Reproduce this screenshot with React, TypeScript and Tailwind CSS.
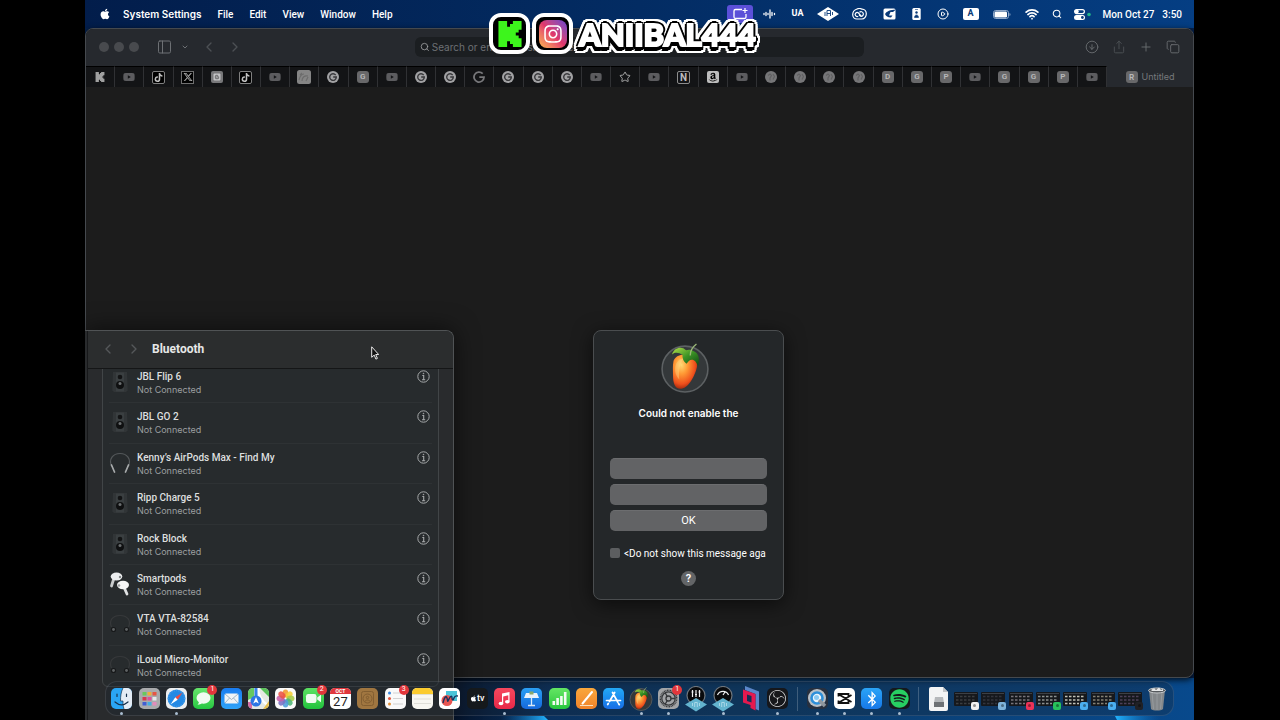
import type { ReactNode } from 'react';
import {
	FaAmazon,
	FaApple,
	FaBlogger,
	FaBluetoothB,
	FaInstagram,
	FaSpotify,
	FaTiktok,
	FaXTwitter,
	FaYoutube,
} from 'react-icons/fa6';
import { SiKick, SiObsstudio } from 'react-icons/si';
import {
	ChevronDown,
	ChevronLeft,
	ChevronRight,
	CircleArrowDown,
	CirclePlay,
	Copy,
	PanelLeft,
	Plus,
	Search,
	Share,
	Star,
	Wifi,
} from 'lucide-react';

const menus = ['File', 'Edit', 'View', 'Window', 'Help'];

const tabs = [
	'kick', 'youtube', 'tiktok', 'x', 'blogger', 'tiktok', 'youtube', 'image', 'round-G', 'G', 'youtube', 'round-G',
	'round-G', 'google', 'round-G', 'round-G', 'round-G', 'youtube', 'star', 'youtube', 'notion', 'amazon', 'youtube',
	'globe', 'globe', 'globe', 'globe', 'D', 'G', 'P', 'youtube', 'G', 'G', 'P', 'youtube',
];

const devices = [
	{ name: 'JBL Flip 6', type: 'speaker' },
	{ name: 'JBL GO 2', type: 'speaker' },
	{ name: 'Kenny’s AirPods Max - Find My', type: 'max' },
	{ name: 'Ripp Charge 5', type: 'speaker' },
	{ name: 'Rock Block', type: 'speaker' },
	{ name: 'Smartpods', type: 'pods' },
	{ name: 'VTA VTA-82584', type: 'headphones' },
	{ name: 'iLoud Micro-Monitor', type: 'headphones' },
];

function MenuSlot({ width, children }: { width: string; children: ReactNode }) {
	return <span className={`flex shrink-0 items-center justify-center ${width}`}>{children}</span>;
}

function MenuBar() {
	return (
		<header className="flex h-7 shrink-0 items-center justify-between bg-linear-to-r from-[#021d4b] via-[#032c63] to-[#053e83] pr-3 pl-[14px] text-[10px] text-white">
			<nav className="flex items-center gap-4">
				<FaApple className="-mr-1 size-3" />
				<a href="#" className="font-['Inter',sans-serif] font-semibold">System Settings</a>
				{menus.map((menu) => (
					<a key={menu} href="#" className="font-medium">{menu}</a>
				))}
			</nav>
			<div className="flex items-center gap-3">
				<MenuSlot width="w-5">
					<svg width="26" height="18" viewBox="0 0 26 18" className="shrink-0">
						<rect width="26" height="18" rx="3" fill="#5b50d8" />
						<path d="M15 4.500H8.500a1.500 1.500 0 0 0-1.500 1.500v6a1.500 1.500 0 0 0 1.500 1.500h9a1.500 1.500 0 0 0 1.500-1.500V9" fill="none" stroke="#fff" strokeWidth="1.300" />
						<path d="M18 3v5M15.500 5.500h5" stroke="#fff" strokeWidth="1.200" />
					</svg>
				</MenuSlot>
				<MenuSlot width="w-4">
					<svg width="13" height="10" viewBox="0 0 13 10" stroke="#fff" strokeWidth="1.300" strokeLinecap="round">
						<path d="M1 4.500v1M3 3.500v3M5 4.500v1M7 1v8M9 3.500v3M11.500 4.500v1" />
					</svg>
				</MenuSlot>
				<MenuSlot width="w-4"><span className="text-[9px] font-bold">UA</span></MenuSlot>
				<MenuSlot width="w-5">
					<svg width="22" height="14" viewBox="0 0 22 14" className="shrink-0">
						<path d="M0 7 11 0l11 7-11 7z" fill="#fff" />
						<path d="M8 5v4M10 9V3.500h3.500V9M10 6.500h3.500M15.500 5v3" fill="none" stroke="#0a3a78" strokeWidth=".9" />
					</svg>
				</MenuSlot>
				<MenuSlot width="w-5">
					<svg width="15" height="12" viewBox="0 0 15 12" fill="none" stroke="#fff" strokeWidth="1.200">
						<path d="M4.500 1.200C6 .5 8.500.3 10 1.200c2.500 0 4.300 2 4.300 4.500S12.500 11 10 11H5C2.500 11 .7 9 .7 6.800S2 2 4.500 1.200z" />
						<path d="M9 8 6.500 5a2 2 0 1 0-.3 3.200M7 7l2 1.300a2.300 2.300 0 1 0-1.500-4" />
					</svg>
				</MenuSlot>
				<MenuSlot width="w-4">
					<svg width="13" height="12" viewBox="0 0 13 12">
						<rect x=".5" y=".5" width="12" height="11" rx="1.500" fill="#fff" />
						<path d="M2 6c2-3 5-4 11-4.500L10 4H7.500L6 7.500h3.500L8 9.500C4.500 9.500 3 8 2 6z" fill="#0a3a78" />
					</svg>
				</MenuSlot>
				<MenuSlot width="w-[14px]">
					<svg width="9" height="12" viewBox="0 0 9 12">
						<rect x=".3" width="8.400" height="12" rx="1.500" fill="#fff" />
						<circle cx="4.500" cy="4.500" r="1.200" fill="#0a3a78" />
						<path d="M2.500 9.500c0-3.500 4-3.500 4 0zM3 1.500h3" fill="#0a3a78" stroke="#0a3a78" strokeWidth=".6" />
					</svg>
				</MenuSlot>
				<MenuSlot width="w-[14px]"><CirclePlay className="size-3" /></MenuSlot>
				<MenuSlot width="w-[18px]">
					<span className="flex h-3 w-4 items-center justify-center rounded-xs bg-white text-[9px] font-bold text-[#0a3a78]">A</span>
				</MenuSlot>
				<MenuSlot width="w-5">
					<svg width="18" height="9" viewBox="0 0 18 9">
						<rect x=".5" y=".5" width="15" height="8" rx="2.200" fill="none" stroke="#8fa9cb" />
						<rect x="1.500" y="1.500" width="12.500" height="6" rx="1.300" fill="#fff" />
						<path d="M16.500 3v3c1.300-.4 1.300-2.600 0-3z" fill="#8fa9cb" />
					</svg>
				</MenuSlot>
				<MenuSlot width="w-4"><Wifi className="size-[14px]" strokeWidth={3} /></MenuSlot>
				<MenuSlot width="w-[10px]"><Search className="size-[10px]" strokeWidth={2.5} /></MenuSlot>
				<MenuSlot width="w-[17px]">
					<svg width="17" height="11" viewBox="0 0 17 11">
						<rect x=".6" y=".6" width="9.800" height="4" rx="2" fill="none" stroke="#fff" strokeWidth="1.200" />
						<circle cx="2.700" cy="2.600" r="2" fill="#fff" />
						<rect y="6" width="11" height="5" rx="2.500" fill="#fff" />
						<circle cx="8.400" cy="8.500" r="1.400" fill="#0a3a78" />
						<circle cx="15" cy="5.500" r="1.800" fill="#20b38a" />
					</svg>
				</MenuSlot>
				<time className="flex gap-2 font-medium whitespace-nowrap">
					<span>Mon Oct 27</span>
					<span>3:50</span>
				</time>
			</div>
		</header>
	);
}

function TabIcon({ type }: { type: string }) {
	switch (type) {
		case 'kick':
			return <SiKick className="size-[10px] text-[#a0a0a0]" />;
		case 'youtube':
			return <FaYoutube className="size-3 text-[#5c5c5f]" />;
		case 'tiktok':
			return (
				<span className="flex size-[13px] items-center justify-center rounded-xs border border-[#808080] bg-black">
					<FaTiktok className="size-[9px] text-[#c0c0c0]" />
				</span>
			);
		case 'x':
			return (
				<span className="flex size-[13px] items-center justify-center border border-[#707070] bg-black">
					<FaXTwitter className="size-[10px] text-[#a8a8a8]" />
				</span>
			);
		case 'blogger':
			return (
				<span className="flex size-3 items-center justify-center rounded-xs bg-[#78787a]">
					<FaBlogger className="size-2 text-[#c4c4c6]" />
				</span>
			);
		case 'image':
			return (
				<svg viewBox="0 0 14 14" className="size-[14px]">
					<rect width="14" height="14" rx="2.500" fill="#858585" />
					<path d="M2 10c1-4 3-6 5-6M5 11c0-3 2-6 6-5M9 11l2-4M3 5l2-2" stroke="#6c6c6c" strokeWidth="1.200" fill="none" />
				</svg>
			);
		case 'round-G':
			return (
				<svg viewBox="0 0 12 12" className="size-3">
					<circle cx="6" cy="6" r="6" fill="#a2a2a4" />
					<path d="M8.700 4.200A3.300 3.300 0 1 0 9.300 6H6.200" stroke="#37373a" strokeWidth="1.400" fill="none" />
				</svg>
			);
		case 'google':
			return (
				<svg viewBox="0 0 12 12" className="size-3">
					<path d="M9.700 2.700A5 5 0 1 0 11 6.200H6.300" stroke="#77777a" strokeWidth="1.800" fill="none" />
				</svg>
			);
		case 'star':
			return <Star className="size-3 text-[#a8a8a8]" />;
		case 'notion':
			return (
				<span className="flex size-[13px] items-center justify-center rounded-xs border border-[#8d8d8d] text-[10px] font-bold text-[#bcbcbc]">
					N
				</span>
			);
		case 'amazon':
			return (
				<span className="flex size-3 items-center justify-center rounded-xs bg-[#bdbdbd]">
					<FaAmazon className="size-[10px] text-black" />
				</span>
			);
		case 'globe':
			return (
				<svg viewBox="0 0 12 12" className="size-3">
					<circle cx="6" cy="6" r="6" fill="#767678" />
					<path d="M3 4.500 5 3l1.500 1.500L5 7v2.500M8 3l1.500 2.500L8 8.500" stroke="#606062" strokeWidth="1.200" fill="none" />
				</svg>
			);
		default:
			return (
				<span className="flex size-3 items-center justify-center rounded-[3px] bg-[#68686a] text-[8px] font-semibold text-[#b8b8ba]">
					{type}
				</span>
			);
	}
}

function Browser() {
	return (
		<main className="relative mb-[42px] flex flex-1 flex-col overflow-hidden rounded-lg border border-[#45494e] bg-[#1c1c1c] shadow-[0_2px_6px_rgba(0,0,0,0.8)]">
			<div className="flex h-[37px] shrink-0 items-center bg-[#26292e] pb-px text-[#6d7074]">
				<div className="flex flex-1 items-center pl-[13px]">
					<div className="flex gap-[5px]">
						<span className="size-[10px] rounded-full bg-[#484a4e]" />
						<span className="size-[10px] rounded-full bg-[#484a4e]" />
						<span className="size-[10px] rounded-full bg-[#484a4e]" />
					</div>
					<button className="ml-[17px]"><PanelLeft className="h-4 w-[17px]" strokeWidth={1.5} /></button>
					<button className="ml-2"><ChevronDown className="size-2" strokeWidth={3} /></button>
					<button className="ml-3"><ChevronLeft className="size-4 text-[#4c5054]" /></button>
					<button className="ml-[10px]"><ChevronRight className="size-4 text-[#4c5054]" /></button>
				</div>
				<label className="flex h-5 w-[449px] items-center gap-[2px] rounded-md bg-[#1b1e21] px-[5px]">
					<Search className="size-[10px] text-[#a2a4a6]" />
					<input
						className="w-full bg-transparent font-['Inter',sans-serif] text-[10px] placeholder:text-[#6d7074] focus:outline-none"
						placeholder="Search or enter website name"
					/>
				</label>
				<div className="flex flex-1 items-center justify-end gap-[13px] pr-[13px]">
					<button><CircleArrowDown className="size-[14px]" strokeWidth={1.5} /></button>
					<button><Share className="size-[14px] text-[#4f5357]" strokeWidth={1.5} /></button>
					<button><Plus className="size-[14px]" strokeWidth={1.5} /></button>
					<button><Copy className="size-[14px]" strokeWidth={1.5} /></button>
				</div>
			</div>
			<div className="flex h-[21px] shrink-0 bg-[#131416]">
				{tabs.map((tab, index) => (
					<button
						key={index}
						className="flex flex-1 items-center justify-center border-t border-r border-t-black border-r-[#303134]"
					>
						<TabIcon type={tab} />
					</button>
				))}
				<button className="flex w-[86px] shrink-0 items-center justify-center gap-1 bg-[#26292e] font-['Inter',sans-serif] text-[9px] text-[#77797d]">
					<TabIcon type="R" />
					Untitled
				</button>
			</div>
		</main>
	);
}

function DeviceIcon({ type }: { type: string }) {
	if (type === 'speaker') {
		return (
			<svg viewBox="0 0 22 24" className="h-6 w-[22px]">
				<path d="M4 2h14l.7 18.500-1.700 1.500H5l-1.700-1.500z" fill="#313537" />
				<path d="M7 2.500h8v19H7z" fill="#3a3f41" />
				<circle cx="11" cy="7" r="2.300" fill="#131415" />
				<circle cx="11" cy="15" r="4" fill="#0f1011" />
				<circle cx="11" cy="13.500" r="1.500" fill="#6a6e70" />
			</svg>
		);
	}
	if (type === 'pods') {
		return (
			<svg viewBox="0 0 22 24" className="h-6 w-[22px]">
				<path d="M5 6 2.500 14" stroke="#c9cccd" strokeWidth="2.800" strokeLinecap="round" />
				<ellipse cx="7.500" cy="4.500" rx="5.800" ry="4" fill="#eceeef" />
				<path d="m14 13 4 9" stroke="#dfe1e2" strokeWidth="2.800" strokeLinecap="round" />
				<ellipse cx="14" cy="13" rx="6" ry="4.200" fill="#f5f6f6" />
				<circle cx="11" cy="5" r="1.200" fill="#85898b" />
				<circle cx="10" cy="13.500" r="1.300" fill="#999d9f" />
			</svg>
		);
	}
	if (type === 'max') {
		return (
			<svg viewBox="0 0 22 24" className="h-6 w-[22px]" fill="none" strokeLinecap="round">
				<path d="M2.500 15C-.5 8 4 2.500 11 2.500S22.500 8 19.500 15" stroke="#54585a" strokeWidth="1.200" />
				<path d="M2.500 14 5.500 21M19.500 14l-3 7" stroke="#a7aaab" strokeWidth="1.700" />
			</svg>
		);
	}
	return (
		<svg viewBox="0 0 22 24" className="h-6 w-[22px]" fill="none">
			<path d="M2.500 15C-.5 8 4 3.500 11 3.500S22.500 8 19.500 15" stroke="#37393b" strokeWidth="1.200" />
			<circle cx="4.500" cy="17.500" r="2.600" fill="#17191a" />
			<circle cx="17.500" cy="17.500" r="2.600" fill="#17191a" />
			<circle cx="4.500" cy="17.500" r="1.400" fill="#606365" />
			<circle cx="17.500" cy="17.500" r="1.400" fill="#606365" />
		</svg>
	);
}

function InfoIcon() {
	return (
		<svg viewBox="0 0 13 13" className="size-[13px]" fill="none" stroke="#a6a9aa">
			<circle cx="6.500" cy="6.500" r="5.700" />
			<path d="M5.300 5.500h1.400v4M5 9.700h3.200" strokeWidth="1.100" />
			<circle cx="6.500" cy="3.500" r=".5" fill="#a6a9aa" strokeWidth=".5" />
		</svg>
	);
}

function BluetoothSettings() {
	return (
		<section className="absolute top-[330px] bottom-0 left-0 flex w-[369px] overflow-hidden rounded-tr-lg border-t border-r border-[#505355] bg-[#292b2d] shadow-[0_0_24px_rgba(0,0,0,0.6)]">
			<div className="w-[3px] border-r border-[#17181a]" />
			<div className="flex flex-1 flex-col">
				<header className="flex h-[38px] shrink-0 items-center border-b border-[#151617] bg-[#2b2d2e] pb-px pl-3">
					<button><ChevronLeft className="size-4 text-[#55585a]" /></button>
					<button className="ml-[10px]"><ChevronRight className="size-4 text-[#55585a]" /></button>
					<h1 className="ml-[10px] text-[12px] font-bold text-[#e6e7e7]">Bluetooth</h1>
				</header>
				<div className="flex-1 overflow-hidden">
					<ul className="-mt-[7px] mr-[14px] ml-[14px] grid h-[325px] auto-rows-fr rounded-b-md border border-[#414547] bg-[#272b2d] px-[6px]">
						{devices.map((device) => (
							<li key={device.name} className="flex items-start gap-[6px] border-b border-[#2e3234] pt-[7px] last:border-0">
								<DeviceIcon type={device.type} />
								<div className="flex-1">
									<h2 className="text-[10px] leading-[14px] font-medium text-[#dddfdf]">{device.name}</h2>
									<p className="font-['Inter',sans-serif] text-[9px] leading-3 text-[#9c9fa0]">Not Connected</p>
								</div>
								<button className="mr-[2px]"><InfoIcon /></button>
							</li>
						))}
					</ul>
				</div>
			</div>
		</section>
	);
}

function FruitIcon({ className }: { className: string }) {
	return (
		<svg viewBox="0 0 48 48" className={className}>
			<defs>
				<radialGradient id="fruit" cx=".35" cy=".3" r=".75">
					<stop offset="0" stopColor="#ffd873" />
					<stop offset=".35" stopColor="#ff9a35" />
					<stop offset=".75" stopColor="#ee4f1c" />
					<stop offset="1" stopColor="#8c1f0b" />
				</radialGradient>
				<linearGradient id="leaf" x1="0" x2="1" y1="0" y2="1">
					<stop offset="0" stopColor="#b4e04a" />
					<stop offset=".5" stopColor="#3d9425" />
					<stop offset="1" stopColor="#0d4714" />
				</linearGradient>
			</defs>
			<circle cx="24" cy="25" r="22" fill="#34383a" stroke="#5d6163" strokeWidth="1.500" />
			<path d="M13 17c2-5 8-7 13-5 7 0 11 4 9.500 11C33.500 32 27 44 19.500 44 14 44 12.500 38 12.500 31c0-5-.5-9 .5-14z" fill="url(#fruit)" />
			<path d="M15.500 20c2-4 4-5 7-5-3 4-5 11-4 20-4-4-5-10-3-15z" fill="#ffe59a" opacity=".35" />
			<path d="M25 7c-4-4-11-3-13.500 4 4-3 7-1 10 0 0 4 1 7 4 9 2-3 3-4 5-4 3 0 4 2 6 6 2-6 1-12-4-14-2-1.500-5-2-7.500-1z" fill="url(#leaf)" />
			<path d="M29 12c0-5 2-8 6-11" fill="none" stroke="#9bb878" strokeWidth="1.300" />
		</svg>
	);
}

function PluginDialog() {
	return (
		<section
			role="dialog"
			className="absolute top-[330px] left-[508px] flex w-[191px] flex-col rounded-lg border border-[#4a4d4f] bg-[#242729] px-4 pt-3 pb-[13px] text-white shadow-[0_4px_20px_rgba(0,0,0,0.6)]"
		>
			<div className="flex justify-center pr-2"><FruitIcon className="size-[50px]" /></div>
			<h2 className="mt-3 h-[53px] text-center font-['Inter',sans-serif] text-[10px] leading-4 font-semibold">Could not enable the</h2>
			<div className="flex flex-col gap-[5px] text-[11px]">
				<button className="h-[21px] rounded-[5px] border-t border-[#6c6d6f] bg-[#626365]" />
				<button className="h-[21px] rounded-[5px] border-t border-[#6c6d6f] bg-[#626365]" />
				<button className="h-[21px] rounded-[5px] border-t border-[#6c6d6f] bg-[#626365]">OK</button>
			</div>
			<label className="mt-[14px] flex h-4 items-center gap-1 text-[10px] whitespace-nowrap">
				<input type="checkbox" className="size-[10px] shrink-0 appearance-none rounded-xs bg-[#5c5e60]" />
				<span>&lt;Do not show this message aga</span>
			</label>
			<button className="mx-auto mt-[10px] size-[15px] rounded-full bg-[#636567] text-[11px] leading-[15px] font-semibold">?</button>
		</section>
	);
}

function AppTile({ color, children }: { color: string; children?: ReactNode }) {
	return (
		<span className={`flex size-[21px] items-center justify-center overflow-hidden rounded-[5px] ${color}`}>{children}</span>
	);
}

function DockItem({ running, badge, children }: { running?: boolean; badge?: string; children: ReactNode }) {
	return (
		<button className="relative flex h-[34px] min-w-0 flex-1 items-center justify-center">
			{children}
			{badge && (
				<span className="absolute top-[3px] right-0 flex size-[10px] items-center justify-center rounded-full bg-[#e2363b] text-[7px] text-white">
					{badge}
				</span>
			)}
			{running && <span className="absolute bottom-px size-[3px] rounded-full bg-[#a9bccf]" />}
		</button>
	);
}

function UaKnob({ meter }: { meter?: boolean }) {
	return (
		<svg viewBox="0 0 22 26" className="h-[26px] w-[22px]">
			<circle cx="11" cy="9.500" r="9" fill="#090a0c" stroke="#6e757c" strokeWidth="1.200" />
			<path
				d={meter ? 'M5.500 9a6 6 0 0 1 11 0M11 9l2-3' : 'M7.500 4v7M11 4v7M14.500 4v7M6.500 6h2M10 8.500h2M13.500 6h2'}
				fill="none"
				stroke="#f0f2f4"
				strokeWidth="1.200"
			/>
			<path d="m11 12 11 6.500-11 7L0 18.500z" fill="#63b4cf" />
			<path d="M7.500 17v3M9.700 21v-4.500h2.600V21M14.500 17v3" fill="none" stroke="#d5eef6" strokeWidth=".6" />
		</svg>
	);
}

function MiniWindow({ badge, rows }: { badge: string; rows: string }) {
	return (
		<span className="relative flex h-[14px] w-[24px] items-center justify-center rounded-[1px] bg-[#16181c]">
			<svg viewBox="0 0 24 14" className="h-[14px] w-6">
				<path d="M1 1.500h22" stroke="#4f5258" strokeWidth=".7" />
				<path d="M2 4.500h20M2 8h20M2 11.500h14" stroke={rows} strokeWidth="1.600" strokeDasharray="2.500 1.500" />
			</svg>
			<span className={`absolute -right-px -bottom-1 flex size-2 items-center justify-center rounded-xs ${badge}`}>
				<span className="size-[3px] rounded-full bg-black/40" />
			</span>
		</span>
	);
}

function Dock() {
	return (
		<nav className="absolute right-[20px] bottom-[4px] left-[20px] flex h-[35px] items-center rounded-xl border border-white/10 bg-[#1a2433]/30 px-[2px]">
			<DockItem running>
				<AppTile color="bg-[#2aa5f4]">
					<svg viewBox="0 0 21 21" className="size-[21px]">
						<path d="M12 0h9v21h-8c-1-3-1-5-1-8H9.500C9.500 8 10 4 12 0z" fill="#e4ecf5" />
						<path d="M6 6v2.500M15.500 6v2.500M4 14c4 3.500 9 3.500 13 0" fill="none" stroke="#18324d" strokeWidth="1.200" strokeLinecap="round" />
						<path d="M12 0c-2 4-2.500 8-2.500 13H12c0 3 0 5 1 8" fill="none" stroke="#18324d" strokeWidth=".7" />
					</svg>
				</AppTile>
			</DockItem>
			<DockItem>
				<AppTile color="bg-[#a9abad]">
					<svg viewBox="0 0 21 21" className="size-[21px]">
						<path d="M3.500 4h4v3.500h-4z" fill="#68c95c" /><path d="M8.500 4h4v3.500h-4z" fill="#f0ae38" /><path d="M13.500 4h4v3.500h-4z" fill="#e75643" />
						<path d="M3.500 9h4v3.500h-4z" fill="#d8374e" /><path d="M8.500 9h4v3.500h-4z" fill="#e04f9a" /><path d="M13.500 9h4v3.500h-4z" fill="#e8e9ea" />
						<path d="M3.500 14h4v3.500h-4z" fill="#405ed4" /><path d="M8.500 14h4v3.500h-4z" fill="#40aee4" /><path d="M13.500 14h4v3.500h-4z" fill="#e08cbb" />
					</svg>
				</AppTile>
			</DockItem>
			<DockItem running>
				<AppTile color="bg-[#eceef0]">
					<svg viewBox="0 0 21 21" className="size-[21px]">
						<circle cx="10.500" cy="10.500" r="9" fill="#2389e4" />
						<circle cx="10.500" cy="10.500" r="7.800" fill="none" stroke="#6db2ee" strokeWidth=".8" strokeDasharray=".7 1.300" />
						<path d="m16.500 4.500-7.200 4.800 2.400 2.400z" fill="#f24b40" />
						<path d="m4.500 16.500 4.800-7.200 2.400 2.400z" fill="#fff" />
					</svg>
				</AppTile>
			</DockItem>
			<DockItem badge="1">
				<AppTile color="bg-linear-to-b from-[#65e56c] to-[#22c741]">
					<svg viewBox="0 0 21 21" className="size-[21px]">
						<ellipse cx="10.500" cy="10" rx="7" ry="5.800" fill="#f1fbf1" />
						<path d="M6 13c0 2-.6 3-1.500 3.700 2 0 3.500-.7 4.500-1.700" fill="#f1fbf1" />
					</svg>
				</AppTile>
			</DockItem>
			<DockItem>
				<AppTile color="bg-linear-to-b from-[#1a7cf0] to-[#2fa3f8]">
					<svg viewBox="0 0 21 21" className="size-[21px]">
						<rect x="3.500" y="5.500" width="14" height="10" rx="1.500" fill="#f0f4f7" />
						<path d="m4 6 6.500 5.500L17 6M4 15l4.500-5M17 15l-4.500-5" fill="none" stroke="#91a6b8" strokeWidth=".8" />
					</svg>
				</AppTile>
			</DockItem>
			<DockItem>
				<AppTile color="bg-[#e6e9e4]">
					<svg viewBox="0 0 21 21" className="size-[21px]">
						<path d="M12 0h9v9z" fill="#5ac25b" /><path d="M0 0h6v9L0 12z" fill="#66c860" />
						<path d="M10 0c0 9 4 14 11 18" stroke="#fff" strokeWidth="2.500" fill="none" />
						<path d="M15 21 21 13v8z" fill="#e7bf4f" /><path d="M0 14h4v7H0z" fill="#d66ba5" />
						<path d="M8 0v10" stroke="#3682e8" strokeWidth="3" />
						<circle cx="8" cy="13" r="5.500" fill="#2d76e5" />
						<path d="m8 9 2.800 6.500L8 14l-2.800 1.500z" fill="#fff" />
					</svg>
				</AppTile>
			</DockItem>
			<DockItem>
				<AppTile color="bg-[#fafafa]">
					<svg viewBox="-10.500 -10.500 21 21" className="size-[21px]">
						{['#f39a2e', '#f5cf38', '#a7cb47', '#4db576', '#4d9cdb', '#7b6fc4', '#c760a8', '#ec5345'].map((fill, index) => (
							<ellipse key={fill} cy="-5" rx="2.900" ry="4" fill={fill} opacity=".88" transform={`rotate(${index * 45})`} />
						))}
					</svg>
				</AppTile>
			</DockItem>
			<DockItem badge="2">
				<AppTile color="bg-linear-to-b from-[#5be263] to-[#1dc23d]">
					<svg viewBox="0 0 21 21" className="size-[21px]" fill="#f0fbf1">
						<rect x="3" y="6" width="10.500" height="9" rx="2.300" />
						<path d="m14.200 9.500 3.800-2.800v7.600l-3.800-2.800z" />
					</svg>
				</AppTile>
			</DockItem>
			<DockItem>
				<span className="flex size-[21px] flex-col overflow-hidden rounded-[5px] bg-white">
					<span className="h-[6px] bg-[#e0373d] text-center text-[5px] leading-[6px] font-bold text-white">OCT</span>
					<span className="text-center text-[13px] leading-[15px] text-[#222]">27</span>
				</span>
			</DockItem>
			<DockItem>
				<AppTile color="bg-[#a07640]">
					<svg viewBox="0 0 21 21" className="size-[21px]" fill="none" stroke="#825e31">
						<rect x="4.500" y="3.500" width="12" height="14" rx="2" />
						<circle cx="10.500" cy="10.500" r="4.500" />
						<circle cx="10.500" cy="9.500" r="1.200" />
						<path d="M8 13.500c.5-2 4.500-2 5 0" />
					</svg>
				</AppTile>
			</DockItem>
			<DockItem badge="3">
				<AppTile color="bg-[#f9f9f9]">
					<svg viewBox="0 0 21 21" className="size-[21px]">
						<circle cx="4.500" cy="5" r="1.500" fill="#3c88e0" /><circle cx="4.500" cy="10.500" r="1.500" fill="#e2553d" /><circle cx="4.500" cy="16" r="1.500" fill="#e5933c" />
						<path d="M8 5h10M8 10.500h10M8 16h10" stroke="#c8c8c9" strokeWidth=".8" />
					</svg>
				</AppTile>
			</DockItem>
			<DockItem>
				<AppTile color="bg-[#f8f7f2]">
					<svg viewBox="0 0 21 21" className="size-[21px]">
						<path d="M0 0h21v6H0z" fill="#fbcb2e" />
						<path d="M0 6.500h21" stroke="#d9d5c4" strokeWidth=".7" />
						<path d="M2 11h17M2 15.500h17" stroke="#d5d4cf" strokeWidth=".7" />
					</svg>
				</AppTile>
			</DockItem>
			<DockItem>
				<AppTile color="bg-white">
					<svg viewBox="0 0 21 21" className="size-[21px]">
						<path d="M7 3h11v10H7z" fill="#4ac4d9" />
						<circle cx="8" cy="12.500" r="5.500" fill="#e75552" />
						<path d="M4 15c1-5 3-8 4-5s0 5 2 1 3-3 3-1 1 3 2 0 2-2 4-2" fill="none" stroke="#17335e" strokeWidth="1.400" />
					</svg>
				</AppTile>
			</DockItem>
			<DockItem>
				<AppTile color="bg-[#15191c]">
					<FaApple className="size-[7px] text-white" />
					<span className="text-[9px] leading-none font-medium text-white">tv</span>
				</AppTile>
			</DockItem>
			<DockItem running>
				<AppTile color="bg-linear-to-b from-[#f5475d] to-[#e82749]">
					<svg viewBox="0 0 21 21" className="size-[21px]" fill="#fff">
						<path d="M8 5.500 15.500 4v9.500h-1.200V7.300L9.200 8.400v7.100H8z" />
						<ellipse cx="7" cy="15.500" rx="2.300" ry="1.800" /><ellipse cx="13.300" cy="13.700" rx="2.300" ry="1.800" />
					</svg>
				</AppTile>
			</DockItem>
			<DockItem>
				<AppTile color="bg-linear-to-b from-[#2b9ff4] to-[#1768db]">
					<svg viewBox="0 0 21 21" className="size-[21px]">
						<path d="M5 5h11l2 5H3z" fill="#e9f2fb" /><path d="M10.500 10v7M7 17.500h7" stroke="#dbe9f7" strokeWidth="1.300" />
						<path d="M8.500 3.500h4v3h-4z" fill="#8aa76a" />
					</svg>
				</AppTile>
			</DockItem>
			<DockItem>
				<AppTile color="bg-linear-to-b from-[#63e663] to-[#23c63e]">
					<svg viewBox="0 0 21 21" className="size-[21px]" fill="#f2fcf2">
						<path d="M3.500 13h2.600v4H3.500zM7.300 10h2.600v7H7.300zM11.100 8h2.600v9h-2.600zM14.900 4h2.600v13h-2.600z" />
					</svg>
				</AppTile>
			</DockItem>
			<DockItem>
				<AppTile color="bg-linear-to-b from-[#f9a73c] to-[#f0832a]">
					<svg viewBox="0 0 21 21" className="size-[21px]">
						<path d="m16 4-9.500 11.500" stroke="#fff" strokeWidth="2" strokeLinecap="round" /><path d="M4 17.500h13" stroke="#fbe0bf" strokeWidth="1" />
					</svg>
				</AppTile>
			</DockItem>
			<DockItem>
				<AppTile color="bg-linear-to-b from-[#24a9f6] to-[#1a6ee6]">
					<svg viewBox="0 0 21 21" className="size-[21px]" stroke="#fff" strokeWidth="1.700" strokeLinecap="round">
						<path d="M9.500 4.500 14.700 14M11.700 4.500 6.500 13.500M3.500 12.500h8.500M14.500 12.500h3M5.300 15.500l-.6 1M15.500 15.500l.8 1.200" />
					</svg>
				</AppTile>
			</DockItem>
			<DockItem running><FruitIcon className="size-6" /></DockItem>
			<DockItem running badge="1">
				<AppTile color="bg-[#a2a4a7]">
					<svg viewBox="0 0 21 21" className="size-[21px]" fill="none" stroke="#36383b">
						<circle cx="10.500" cy="10.500" r="8.200" strokeWidth="1.400" strokeDasharray="1 .6" />
						<circle cx="10.500" cy="10.500" r="6.700" strokeWidth="1.300" /><circle cx="10.500" cy="10.500" r="2.500" strokeWidth="1.300" />
						<path d="M12.500 10.500H17M9.500 8.800 7.300 5M9.500 12.200 7.300 16" strokeWidth="1.300" />
					</svg>
				</AppTile>
			</DockItem>
			<DockItem><UaKnob /></DockItem>
			<DockItem running><UaKnob meter /></DockItem>
			<DockItem>
				<svg viewBox="0 0 18 26" className="h-[26px] w-[18px]">
					<path d="m3 0 14 5.500v19l-3.500-1.500V8L3 4z" fill="#5b86c9" />
					<path d="M1 3.500 13.500 8v16.500L8.500 22v-3L1 16.500z" fill="#e5194f" />
					<path d="m5 8.500 4.500 1.500v6.500L5 15z" fill="#152d55" />
				</svg>
			</DockItem>
			<DockItem running>
				<AppTile color="bg-[#16171b]"><SiObsstudio className="size-[17px] text-[#d8d9db]" /></AppTile>
			</DockItem>
			<span className="flex w-3 shrink-0 justify-center"><span className="h-6 w-px bg-white/20" /></span>
			<DockItem running>
				<AppTile color="bg-[#27303f]">
					<svg viewBox="0 0 21 21" className="size-[21px]">
						<circle cx="10" cy="10" r="9" fill="#b9c0c7" />
						<circle cx="10" cy="10" r="5.500" fill="#e9f5fd" stroke="#2d8fda" strokeWidth="2.600" />
						<path d="m12 12 6 6" stroke="#8f969d" strokeWidth="3.500" />
						<circle cx="9.500" cy="9.500" r="2.500" fill="#8ac9f2" />
					</svg>
				</AppTile>
			</DockItem>
			<DockItem running>
				<AppTile color="bg-white">
					<svg viewBox="0 0 21 21" className="size-[21px]" fill="none" stroke="#111" strokeWidth="1.800">
						<path d="M17.500 7 5 14.500M17.500 14 5 6.500M4.500 8.500V6h10v2.500M4.500 12.500V15h10v-2.500" />
					</svg>
				</AppTile>
			</DockItem>
			<DockItem running>
				<AppTile color="bg-linear-to-b from-[#2ba4f7] to-[#1878e8]"><FaBluetoothB className="size-4 text-white" /></AppTile>
			</DockItem>
			<DockItem running>
				<AppTile color="bg-[#15191c]"><FaSpotify className="size-[19px] text-[#27cf62]" /></AppTile>
			</DockItem>
			<span className="flex w-3 shrink-0 justify-center"><span className="h-6 w-px bg-white/20" /></span>
			<DockItem>
				<svg viewBox="0 0 20 24" className="h-6 w-5">
					<path d="M2 0h12l5 5v17a2 2 0 0 1-2 2H2a2 2 0 0 1-2-2V2a2 2 0 0 1 2-2z" fill="#f3f4f4" />
					<path d="M14 0v5h5z" fill="#c3c5c7" />
					<path d="m6 10-1 6h10l-1-6z" fill="#b5b8ba" /><path d="M5 15h10v5H5z" fill="#6e7275" />
				</svg>
			</DockItem>
			<DockItem><MiniWindow badge="bg-[#f1f1f1]" rows="#3b3d40" /></DockItem>
			<DockItem><MiniWindow badge="bg-[#7fb4da]" rows="#33343c" /></DockItem>
			<DockItem><MiniWindow badge="bg-[#ea3358]" rows="#77747a" /></DockItem>
			<DockItem><MiniWindow badge="bg-[#27c15b]" rows="#8d9190" /></DockItem>
			<DockItem><MiniWindow badge="bg-[#4aaef0]" rows="#c1c1b7" /></DockItem>
			<DockItem><MiniWindow badge="bg-[#4aaef0]" rows="#858174" /></DockItem>
			<DockItem><MiniWindow badge="bg-[#202126]" rows="#4d4058" /></DockItem>
			<DockItem>
				<svg viewBox="0 0 20 24" className="h-6 w-5">
					<path d="M2 3h16l-2 19c-2 2-10 2-12 0z" fill="#83878a" />
					<path d="M5 5l1.500 17M10 5v18M15 5l-1.500 17" stroke="#999da0" strokeWidth=".9" />
					<ellipse cx="10" cy="3.500" rx="8.500" ry="2.500" fill="#565a5e" stroke="#c3c6c8" />
					<path d="m4 3 3-2 2 2 3-2.500L14 3l2-1v2H5z" fill="#e5e7e8" />
				</svg>
			</DockItem>
		</nav>
	);
}

function Wallpaper() {
	return (
		<svg viewBox="0 0 1109 42" preserveAspectRatio="none" className="absolute bottom-0 left-0 h-[42px] w-full">
			<defs>
				<linearGradient id="night">
					<stop offset=".33" stopColor="#05142c" />
					<stop offset=".42" stopColor="#0a3260" />
					<stop offset=".6" stopColor="#0b3c6b" />
					<stop offset="1" stopColor="#08498c" />
				</linearGradient>
				<linearGradient id="glow-left">
					<stop offset="0" stopColor="#0b6fc0" stopOpacity="0" />
					<stop offset="1" stopColor="#22b4ff" />
				</linearGradient>
				<linearGradient id="glow-right">
					<stop offset="0" stopColor="#22b4ff" />
					<stop offset="1" stopColor="#0b6fc0" stopOpacity="0" />
				</linearGradient>
			</defs>
			<path d="M0 0h1109v42H0z" fill="url(#night)" />
			<path d="M415 38h44l4 4h-48z" fill="url(#glow-left)" />
			<path d="M1030 38h45v4h-43z" fill="url(#glow-right)" />
		</svg>
	);
}

function StreamTag() {
	return (
		<div className="absolute top-[13px] left-[404px] flex items-center">
			<span className="flex size-[41px] items-center justify-center rounded-xl border-4 border-white bg-black">
				<SiKick className="size-[26px] text-[#3df51c]" />
			</span>
			<span className="ml-[2px] flex size-[41px] items-center justify-center rounded-xl border-4 border-white bg-black">
				<span className="flex size-7 items-center justify-center rounded-lg bg-linear-to-tr from-[#f9b44a] via-[#e0356c] to-[#6a3bd0]">
					<FaInstagram className="size-5 text-white" />
				</span>
			</span>
			<span className="pl-[6px] font-[Lato] text-[31px] leading-[36px] font-black text-white [-webkit-text-stroke:2px_white] [filter:drop-shadow(2px_0_0_white)_drop-shadow(-2px_0_0_white)_drop-shadow(0_2px_0_white)_drop-shadow(0_-2px_0_white)] [text-shadow:3px_0_black,-3px_0_black,0_3px_black,0_-3px_black,2px_2px_black,-2px_2px_black,2px_-2px_black,-2px_-2px_black,-3px_3px_black,-2px_5px_black,0_5px_black,2px_4px_black]">
				ANIIBAL444
			</span>
		</div>
	);
}

export default function App() {
	return (
		<div className="h-screen bg-black pr-[86px] pl-[85px] font-['Roboto',sans-serif]">
			<div className="relative flex h-full flex-col overflow-hidden bg-[#04204b]">
				<Wallpaper />
				<MenuBar />
				<Browser />
				<PluginDialog />
				<BluetoothSettings />
				<Dock />
				<StreamTag />
				<svg viewBox="0 0 8 14" className="absolute top-[346px] left-[286px] h-[14px] w-2">
					<path d="M.7.800v10.500l2.500-2.200 1.700 4 1.500-.7-1.700-3.900h3z" fill="#111" stroke="#fff" strokeWidth=".9" />
				</svg>
			</div>
		</div>
	);
}
